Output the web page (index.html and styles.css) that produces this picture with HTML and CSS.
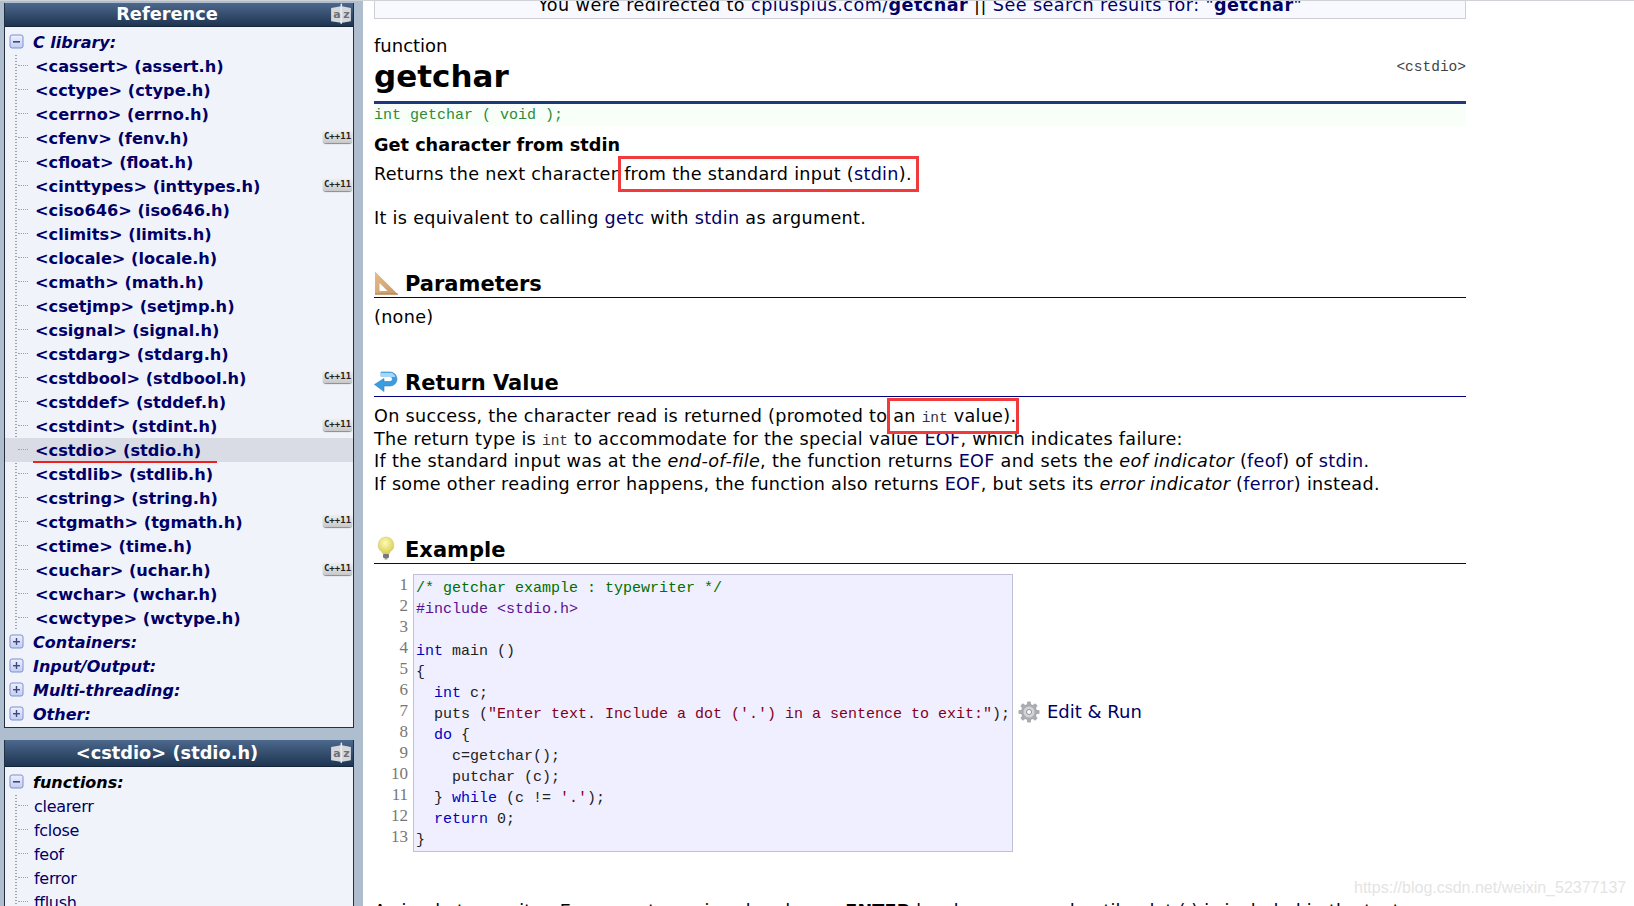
FILE: index.html
```html
<!DOCTYPE html>
<html lang="en">
<head>
<meta charset="utf-8">
<title>getchar - C++ Reference</title>
<link rel="stylesheet" href="styles.css">
</head>
<body>
<svg class="defs" width="0" height="0" aria-hidden="true">
  <defs>
    <linearGradient id="boxg" x1="0" y1="0" x2="0" y2="1"><stop offset="0" stop-color="#eef1fc"/><stop offset="1" stop-color="#c4cdf2"/></linearGradient>
    <symbol id="minus" viewBox="0 0 15 15"><rect x="1" y="1" width="13" height="13" rx="2" fill="url(#boxg)" stroke="#7b8fd6"/><rect x="4" y="7" width="7" height="1.6" fill="#3c4a7c"/></symbol>
    <symbol id="plus" viewBox="0 0 15 15"><rect x="1" y="1" width="13" height="13" rx="2" fill="url(#boxg)" stroke="#7b8fd6"/><rect x="4" y="7" width="7" height="1.4" fill="#3c4a7c"/><rect x="6.8" y="4" width="1.4" height="7" fill="#3c4a7c"/></symbol>
    <symbol id="az" viewBox="0 0 20 20"><path d="M10 0.5V3L1 4.5V16.5L10 18V19.5L11 18L19 16.5V4.5L11 3V0.5Z" fill="#d4d8dd"/><rect x="9.6" y="1" width="1" height="18" fill="#f4f4f4"/><text x="3" y="14" class="azt">a</text><text x="12" y="14" class="azt">z</text></symbol>
  </defs>
</svg>
<div class="page">
  <aside class="side">
    <section class="panel">
      <header class="phead"><span class="ptitle">Reference</span><svg class="azicon"><use href="#az"/></svg></header>
      <ul class="tree">
        <li class="grp"><svg class="tog"><use href="#minus"/></svg><a>C library:</a></li>
        <li class="kids">
          <ul>
            <li class="it"><a>&lt;cassert&gt; (assert.h)</a></li>
            <li class="it"><a>&lt;cctype&gt; (ctype.h)</a></li>
            <li class="it"><a>&lt;cerrno&gt; (errno.h)</a></li>
            <li class="it"><a>&lt;cfenv&gt; (fenv.h)</a><span class="cpp">C++11</span></li>
            <li class="it"><a>&lt;cfloat&gt; (float.h)</a></li>
            <li class="it"><a>&lt;cinttypes&gt; (inttypes.h)</a><span class="cpp">C++11</span></li>
            <li class="it"><a>&lt;ciso646&gt; (iso646.h)</a></li>
            <li class="it"><a>&lt;climits&gt; (limits.h)</a></li>
            <li class="it"><a>&lt;clocale&gt; (locale.h)</a></li>
            <li class="it"><a>&lt;cmath&gt; (math.h)</a></li>
            <li class="it"><a>&lt;csetjmp&gt; (setjmp.h)</a></li>
            <li class="it"><a>&lt;csignal&gt; (signal.h)</a></li>
            <li class="it"><a>&lt;cstdarg&gt; (stdarg.h)</a></li>
            <li class="it"><a>&lt;cstdbool&gt; (stdbool.h)</a><span class="cpp">C++11</span></li>
            <li class="it"><a>&lt;cstddef&gt; (stddef.h)</a></li>
            <li class="it"><a>&lt;cstdint&gt; (stdint.h)</a><span class="cpp">C++11</span></li>
            <li class="it sel"><a>&lt;cstdio&gt; (stdio.h)</a></li>
            <li class="it"><a>&lt;cstdlib&gt; (stdlib.h)</a></li>
            <li class="it"><a>&lt;cstring&gt; (string.h)</a></li>
            <li class="it"><a>&lt;ctgmath&gt; (tgmath.h)</a><span class="cpp">C++11</span></li>
            <li class="it"><a>&lt;ctime&gt; (time.h)</a></li>
            <li class="it"><a>&lt;cuchar&gt; (uchar.h)</a><span class="cpp">C++11</span></li>
            <li class="it"><a>&lt;cwchar&gt; (wchar.h)</a></li>
            <li class="it"><a>&lt;cwctype&gt; (wctype.h)</a></li>
          </ul>
        </li>
        <li class="grp"><svg class="tog"><use href="#plus"/></svg><a>Containers:</a></li>
        <li class="grp"><svg class="tog"><use href="#plus"/></svg><a>Input/Output:</a></li>
        <li class="grp"><svg class="tog"><use href="#plus"/></svg><a>Multi-threading:</a></li>
        <li class="grp"><svg class="tog"><use href="#plus"/></svg><a>Other:</a></li>
      </ul>
    </section>
    <section class="panel second">
      <header class="phead tall"><span class="ptitle">&lt;cstdio&gt; (stdio.h)</span><svg class="azicon"><use href="#az"/></svg></header>
      <ul class="tree">
        <li class="grp blk"><svg class="tog"><use href="#minus"/></svg><a>functions:</a></li>
        <li class="kids">
          <ul class="plain">
            <li class="it"><a>clearerr</a></li>
            <li class="it"><a>fclose</a></li>
            <li class="it"><a>feof</a></li>
            <li class="it"><a>ferror</a></li>
            <li class="it"><a>fflush</a></li>
          </ul>
        </li>
      </ul>
    </section>
  </aside>
  <main class="main">
    <div class="redirect">You were redirected to <a>cplusplus.com/<b>getchar</b></a> || <a>See search results for: "<b>getchar</b>"</a></div>
    <div class="kind">function</div>
    <div class="titlerow">
      <h1>getchar</h1>
      <code class="hdr">&lt;cstdio&gt;</code>
    </div>
    <div class="proto">int getchar ( void );</div>
    <div class="brief">Get character from stdin</div>
    <p class="l1">Returns the next character <span class="mark m1">from the standard input (<a>stdin</a>).</span></p>
    <p class="l2">It is equivalent to calling <a>getc</a> with <a>stdin</a> as argument.</p>

    <h3 class="sec s-par">
      <svg class="secicon" viewBox="0 0 24 24"><defs><linearGradient id="rul" x1="0" y1="0" x2="1" y2="1"><stop offset="0" stop-color="#e8bb8d"/><stop offset="1" stop-color="#c99765"/></linearGradient></defs><path d="M1 0.500L24 23.500H1Z" fill="url(#rul)"/><path d="M5.500 12L13.500 20H5.500Z" fill="#fff"/><path d="M1 22.500H24V23.500H1Z" fill="#a97c50"/></svg>
      Parameters
    </h3>
    <p class="none">(none)</p>

    <h3 class="sec s-ret">
      <svg class="secicon" viewBox="0 0 24 24"><path d="M7 2H16A7 7 0 0 1 16 16H10V21.500L0.500 14.500L10 8.500V11.500H16A2.500 2.500 0 0 0 16 6.500H7Z" fill="#3d9be0" stroke="#2d7fc4" stroke-width=".6"/><path d="M7 2.800H16A6 6 0 0 1 21.500 7H7Z" fill="#a4d8f8"/></svg>
      Return Value
    </h3>
    <div class="ret">
      <div>On success, the character read is returned (promoted to <span class="mark m2">an <code>int</code> value).</span></div>
      <div>The return type is <code>int</code> to accommodate for the special value <a>EOF</a>, which indicates failure:</div>
      <div>If the standard input was at the <i>end-of-file</i>, the function returns <a>EOF</a> and sets the <i>eof indicator</i> (<a>feof</a>) of <a>stdin</a>.</div>
      <div>If some other reading error happens, the function also returns <a>EOF</a>, but sets its <i>error indicator</i> (<a>ferror</a>) instead.</div>
    </div>

    <h3 class="sec s-ex">
      <svg class="secicon bulbicon" viewBox="0 0 24 24"><defs><radialGradient id="bulb" cx=".45" cy=".35" r=".7"><stop offset="0" stop-color="#fdfbb4"/><stop offset="1" stop-color="#d6c84a"/></radialGradient></defs><path d="M12 1A8 8 0 0 0 7.500 15.500L9 18H15L16.500 15.500A8 8 0 0 0 12 1Z" fill="url(#bulb)" stroke="#c9c58a" stroke-width=".5"/><rect x="9" y="18" width="6" height="4" rx="1" fill="#77787a"/><rect x="10.500" y="22" width="3" height="1.500" fill="#9a9a9a"/></svg>
      Example
    </h3>
    <div class="example">
      <div class="nums"><span>1</span><span>2</span><span>3</span><span>4</span><span>5</span><span>6</span><span>7</span><span>8</span><span>9</span><span>10</span><span>11</span><span>12</span><span>13</span></div>
      <pre class="code"><span class="c">/* getchar example : typewriter */</span>
<span class="p">#include &lt;stdio.h&gt;</span>

<span class="k">int</span> main ()
{
  <span class="k">int</span> c;
  puts (<span class="s">"Enter text. Include a dot ('.') in a sentence to exit:"</span>);
  <span class="k">do</span> {
    c=getchar();
    putchar (c);
  } <span class="k">while</span> (c != <span class="s">'.'</span>);
  <span class="k">return</span> 0;
}</pre>
      <a class="run">
        <svg class="gear" viewBox="0 0 22 22"><g fill="#a9adb1"><circle cx="11" cy="11" r="8"/><rect x="9" y="0.500" width="4" height="21" rx="1"/><rect x="9" y="0.500" width="4" height="21" rx="1" transform="rotate(45 11 11)"/><rect x="9" y="0.500" width="4" height="21" rx="1" transform="rotate(90 11 11)"/><rect x="9" y="0.500" width="4" height="21" rx="1" transform="rotate(135 11 11)"/></g><circle cx="11" cy="11" r="5.500" fill="#d3d5d8"/><circle cx="11" cy="11" r="2.500" fill="#fff" stroke="#8e9296"/></svg>
        Edit &amp; Run
      </a>
    </div>
    <p class="last">A simple typewriter. Every sentence is echoed once <b>ENTER</b> has been pressed until a dot (.) is included in the text.</p>
  </main>
</div>
<div class="wm">https://blog.csdn.net/weixin_52377137</div>
</body>
</html>
```

FILE: styles.css
```css
* { box-sizing: border-box; }
html, body { margin: 0; padding: 0; background: #fff; }
body {
  height: 906px;
  overflow: hidden;
  position: relative;
  font-family: "DejaVu Sans", Verdana, sans-serif;
  color: #000;
}
.defs { position: absolute; }
ul { list-style: none; margin: 0; padding: 0; }
a { color: #000066; text-decoration: none; }
p { margin: 0; }

.page {
  display: flex;
  height: 906px;
  overflow: hidden;
  border-top: 1px solid #cfd2d6;
}

/* sidebar */
.side {
  flex: 0 0 363px;
  background: #aebecf;
  padding: 2px 9px 0 4px;
  display: flex;
  flex-direction: column;
  gap: 12px;
}
.panel {
  background: #f0f4fa;
  border: solid #22303f;
  border-width: 0 1px 1px 1px;
  flex: none;
}
.panel.second { border-bottom: 0; flex: 1; }
.phead {
  height: 24px;
  background: linear-gradient(#4c688c, #1e3552);
  border-bottom: 1px solid #16263a;
  display: flex;
  align-items: center;
  justify-content: center;
  position: relative;
  padding: 0 24px 2px 0;
}
.phead.tall { height: 27px; padding-bottom: 1px; }
.ptitle {
  color: #fff;
  font-weight: bold;
  font-size: 17.800px;
}
.azicon { position: absolute; right: 1px; top: 0; width: 22px; height: 22px; }
.tall .azicon { top: 2px; }
.azt { font: bold 10px "DejaVu Sans", sans-serif; fill: #6d7074; }

.tree { padding: 3px 0 1px; }
.grp {
  height: 24px;
  display: flex;
  align-items: center;
  padding-left: 4px;
  font-weight: bold;
  font-style: italic;
  font-size: 16px;
}
.grp a { margin-left: 9px; }
.blk a { color: #000; }
.tog { width: 15px; height: 15px; flex: none; position: relative; top: -1px; }
.kids {
  margin-left: 10px;
  background: radial-gradient(circle, #9da3ad 0.6px, transparent 0.8px) 0 0 / 2px 3px repeat-y;
}
.it {
  height: 24px;
  display: flex;
  align-items: center;
  justify-content: space-between;
  padding-left: 20px;
  font-weight: bold;
  font-size: 16.200px;
  margin-left: -10px;
  position: relative;
  white-space: nowrap;
}
.it::before {
  content: "";
  position: absolute;
  left: 13px;
  top: 11px;
  width: 10px;
  border-top: 1px dotted #9da3ad;
}
.it a { position: relative; left: 10px; }
.sel { background: #d9dce4; }
.sel::after {
  content: "";
  position: absolute;
  left: 28px;
  top: 23px;
  width: 184px;
  height: 2px;
  background: #f02020;
}
.plain .it { font-weight: normal; font-size: 16px; letter-spacing: -0.3px; }
.plain .it a { left: 9px; }
.cpp {
  width: 29px;
  height: 13px;
  margin-right: 1px;
  border-radius: 3px;
  background: linear-gradient(#f2f2f2, #c8c8c8);
  box-shadow: 0 1px 1px #888;
  font: bold 9px/13px "DejaVu Sans Mono", monospace;
  letter-spacing: 0;
  text-align: center;
  color: #222;
  position: relative;
  top: -2px;
}

/* main */
.main {
  flex: 0 0 1092px;
  margin-left: 11px;
  font-size: 17.600px;
  letter-spacing: 0.3px;
  line-height: 23px;
}
code { font: 14.500px "Liberation Mono", monospace; color: #333; letter-spacing: 0; }
.redirect {
  margin-top: -13px;
  height: 31px;
  padding-top: 6px;
  line-height: 23px;
  letter-spacing: 0.43px;
  background: #f8f9ff;
  border: 1px solid #cfd0d6;
  border-top: 0;
  text-align: center;
  white-space: nowrap;
}
.kind { margin-top: 15px; letter-spacing: 0; font-size: 18px; }
.titlerow {
  display: flex;
  justify-content: space-between;
  height: 47px;
  border-bottom: 3px solid #1f3a7a;
  padding-top: 2px;
}
h1 { margin: 0; font-size: 31px; line-height: 34px; font-weight: bold; letter-spacing: 0; }
.hdr { font-size: 14.500px; color: #444; margin-top: 0; }
.proto {
  background: #f8fff8;
  height: 22px;
  padding-top: 1px;
  font: 15px/22px "Liberation Mono", monospace;
  letter-spacing: 0;
  color: #2f8a3a;
}
.brief { font-weight: bold; margin-top: 8px; font-size: 17.700px; letter-spacing: 0; }
.l1 { margin-top: 6px; }
.l2 { margin-top: 21px; }
.mark { position: relative; }
.mark::after {
  content: "";
  position: absolute;
  border: 3px solid #f03a3c;
  pointer-events: none;
}
.m1::after { left: -6px; right: -7px; top: -8px; bottom: -8px; }
.m2::after { left: -6px; right: -3px; top: -8px; bottom: -8px; }
.sec {
  margin: 0;
  height: 29px;
  padding-top: 2px;
  display: flex;
  align-items: center;
  font-size: 21px;
  font-weight: bold;
  border-bottom: 1px solid #000080;
  line-height: 24px;
  letter-spacing: 0;
}
.secicon { width: 24px; height: 24px; margin: -3px 7px 0 0; flex: none; }
.s-par { margin-top: 39px; }
.none { margin-top: 8px; }
.s-ret { margin-top: 39px; }
.ret { margin-top: 8px; line-height: 22.700px; }
.s-ex { margin-top: 39px; }
.example {
  display: flex;
  align-items: flex-start;
  margin-top: 10px;
  letter-spacing: 0;
}
.nums {
  width: 39px;
  padding: 0 5px 0 0;
  text-align: right;
  font: 17px/21px "Liberation Serif", serif;
  color: #777;
  display: flex;
  flex-direction: column;
}
.code {
  margin: 0;
  width: 600px;
  height: 278px;
  padding: 3px 0 0 2px;
  background: #efefff;
  border: 1px solid #c0c0d8;
  font: 15px/21px "Liberation Mono", monospace;
  color: #222;
}
.c { color: #007000; }
.p { color: #5a0f90; }
.k { color: #0000c0; }
.s { color: #800020; }
.run {
  display: flex;
  align-items: center;
  margin: 126px 0 0 5px;
  font-size: 18px;
  line-height: 24px;
}
.gear { width: 22px; height: 22px; margin-right: 7px; }
.last { margin-top: 48px; white-space: nowrap; letter-spacing: 0.2px; }
.wm {
  position: absolute;
  left: 1354px;
  top: 877px;
  font: 16px/22px "Liberation Sans", sans-serif;
  color: #e4e4e4;
  white-space: nowrap;
}
```
